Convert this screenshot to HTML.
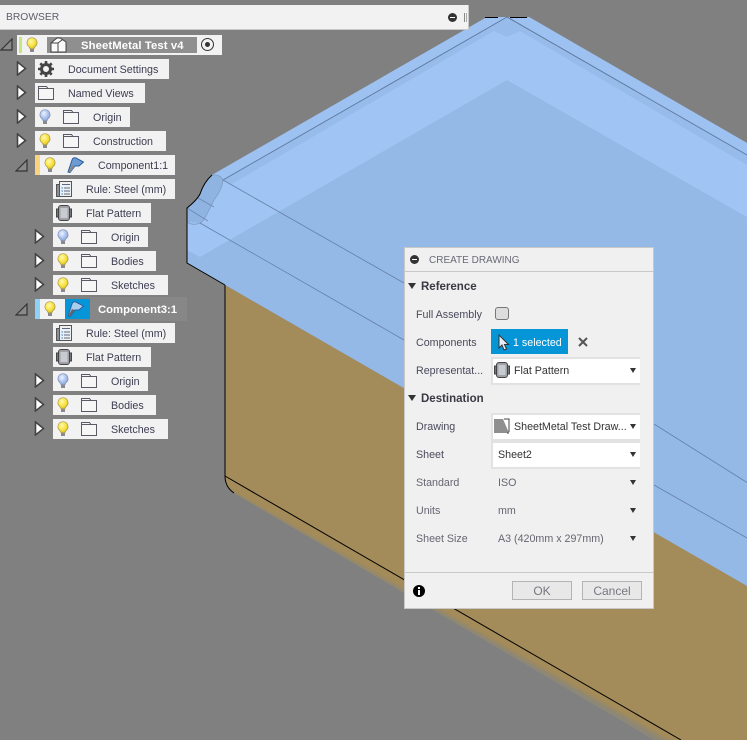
<!DOCTYPE html>
<html><head><meta charset="utf-8">
<style>
html,body{margin:0;padding:0;background:#808080}
#p{position:relative;width:747px;height:740px;overflow:hidden;background:#808080;font-family:"Liberation Sans",sans-serif;font-size:10.7px;color:#3d3d52}
#bg{position:absolute;left:0;top:0}
.a{position:absolute}
.r{position:absolute;height:20px;background:#f2f2f2}
.t{position:absolute;line-height:22px;white-space:nowrap}
.b{font-weight:bold;font-size:11.3px;color:#fff}
.l{position:absolute;left:416px;line-height:16px;white-space:nowrap;color:#4a4a5c}
.v{position:absolute;left:498px;line-height:16px;white-space:nowrap;color:#4a4a5c}
.s{position:absolute;left:491px;width:147px;height:24px;background:#fff;border:solid #e2e2e2;border-width:2px 0 2px 2px;box-sizing:content-box}
.h{position:absolute;left:421px;font-weight:bold;line-height:14px;font-size:11.5px;color:#3a3a44}
.ar{position:absolute;left:630px;width:0;height:0;border:3.5px solid transparent;border-top:5px solid #333;border-bottom:0}
.btn{position:absolute;top:581px;height:17px;width:58px;background:#e8e8e8;border:1px solid #b4b4b4;text-align:center;line-height:18px;font-size:12px;color:#777780}
svg.i{position:absolute;overflow:visible}
</style></head><body><div id="p">
<svg id="bg" width="747" height="740" viewBox="0 0 747 740">
<defs><linearGradient id="eg" gradientUnits="userSpaceOnUse" x1="400" y1="577" x2="394" y2="587.500"><stop offset="0" stop-color="#a38b5a"/><stop offset=".55" stop-color="#a38b5a"/><stop offset="1" stop-color="#8c8776"/></linearGradient></defs>
<polygon points="225,285 747,586 747,740 681,740 225,476" fill="#a38b5a"/>
<polygon points="225,476 681,740 654,740 234,493 225,484" fill="url(#eg)"/>
<path d="M225,285V476Q225,487 234,493" fill="none" stroke="#000" stroke-width="1"/>
<path d="M225,476L681,740" stroke="#000" stroke-width="1" fill="none"/>
<polygon points="487,17 529,17 747,143 747,586 187,263 187,208 198,198 202,190 212,175" fill="#95b9e7"/>
<polygon points="487,17 529,17 747,143 747,155 507,17 223,180 212,175" fill="#9dc1f1"/>
<polygon points="507,18 747,155 747,217 507,80 200,257 187,250 187,222 223,181" fill="#a0c4f4"/>
<polygon points="507,18 747,155 747,165 520,31 507,37 494,31 232,184 223,181" fill="#97bbea"/>
<path d="M212,175Q220,174 223,180Q222,190 214,200L206,216Q203,222 200,223L187,222V208Q197,200 200,194Q204,182 212,175Z" fill="#90b4e1"/>
<path d="M212,175Q220,174 223,180Q222,190 214,200L206,216Q203,222 200,223Q193,226 187,222" fill="none" stroke="#7f9cc4" stroke-width=".8"/>
<path d="M187,208L208,221M198,198L214,207" stroke="#6d88ae" stroke-width=".8" fill="none"/>
<path d="M485,17.500H498M510,17.500H527" fill="none" stroke="#000" stroke-width="1"/>
<path d="M212,175Q204,182 200,194Q197,200 187,208V263L225,285" fill="none" stroke="#000" stroke-width="1"/>
<path d="M223,180L507,17L747,155" fill="none" stroke="#5f789e" stroke-width=".9"/>
<path d="M223,180L404,283M654,424L747,482.500M200,223L404,340M654,485L747,538" fill="none" stroke="#6480a8" stroke-width=".8"/>
</svg>

<svg width="0" height="0" style="position:absolute"><defs>
<radialGradient id="yg" cx=".4" cy=".35" r=".7"><stop offset="0" stop-color="#fff8b0"/><stop offset=".6" stop-color="#f8e23c"/><stop offset="1" stop-color="#d8b820"/></radialGradient>
<radialGradient id="bg2" cx=".4" cy=".35" r=".7"><stop offset="0" stop-color="#eef3ff"/><stop offset=".6" stop-color="#a9c0ec"/><stop offset="1" stop-color="#8aa3d4"/></radialGradient>
<symbol id="by" viewBox="0 0 12 16"><path d="M6,.7a5,5 0 0 1 3,9c-.8.7-1,1.2-1,2H4c0-.8-.2-1.3-1-2a5,5 0 0 1 3-9z" fill="url(#yg)" stroke="#a89a50" stroke-width=".7"/><rect x="4" y="12" width="4" height="3" fill="#8a8a8a"/></symbol>
<symbol id="bb" viewBox="0 0 12 16"><path d="M6,.7a5,5 0 0 1 3,9c-.8.7-1,1.2-1,2H4c0-.8-.2-1.3-1-2a5,5 0 0 1 3-9z" fill="url(#bg2)" stroke="#7f8fb5" stroke-width=".7"/><rect x="4" y="12" width="4" height="3" fill="#8a8a8a"/></symbol>
<symbol id="fo" viewBox="0 0 16 14"><path d="M.5,13.500V.5H8.500L10,2.500H15.500V13.500ZM.5,2.500H10" fill="#f6f6f6" stroke="#5a5a64" stroke-width="1"/></symbol>
<symbol id="tr" viewBox="0 0 11 15"><path d="M1.500,1L9.500,7.500L1.500,14Z" fill="#fff" stroke="#444" stroke-width="1.600"/></symbol>
<symbol id="td" viewBox="0 0 13 13"><path d="M1,12L12,1V12Z" fill="#8a8a8a" stroke="#333" stroke-width="1.200"/></symbol>
<symbol id="fp" viewBox="0 0 16 16"><rect x=".5" y="4" width="15" height="8" fill="#777" stroke="#444"/><rect x="2.500" y=".5" width="11" height="15" rx="2.500" fill="#9ea2a8" stroke="#444"/><rect x="4.500" y="3" width="7" height="10" fill="#c8cbcf"/></symbol>
<symbol id="ru" viewBox="0 0 16 16"><rect x="3.500" y=".5" width="12" height="15" fill="#eef1f4" stroke="#555"/><rect x=".5" y="3.500" width="3" height="12" fill="#8b8f96" stroke="#555"/><path d="M6,3.500h8M8,7h6M8,10h6M8,13h6" stroke="#5a6a80"/><path d="M5.500,7h1.500M5.500,10h1.500M5.500,13h1.500" stroke="#2c82c9"/></symbol>
<symbol id="co" viewBox="0 0 17 16"><path d="M1,15L5,3Q6,0 9,1L16.500,5L12,9H8L3,15.500Z" fill="#6d9bd2" stroke="#2a5f9e" stroke-width="1"/><path d="M1.500,14.500L3.500,15L7.500,9L5,8Z" fill="#8a8a8a"/></symbol>
<symbol id="co2" viewBox="0 0 17 16"><path d="M1,15L5,3Q6,0 9,1L16.500,5L12,9H8L3,15.500Z" fill="#a9cdee" stroke="#2a5f9e" stroke-width="1"/><path d="M1.500,14.500L3.500,15L7.500,9L5,8Z" fill="#666"/></symbol>
</defs></svg>

<!-- browser header -->
<div class="a" style="left:0;top:5px;width:468px;height:24px;background:#f2f2f2;border-bottom:1px solid #c8c8c8;border-right:1px solid #c8c8c8"></div>
<div class="a" style="left:6px;top:11px;line-height:14px;color:#5f5f6a;font-size:10.300px">BROWSER</div>
<div class="a" style="left:448px;top:13px;width:9px;height:9px;border-radius:50%;background:#333"></div>
<div class="a" style="left:450px;top:17px;width:5px;height:1px;background:#fff"></div>
<div class="a" style="left:464px;top:13px;width:1px;height:9px;background:#888"></div>
<div class="a" style="left:466px;top:13px;width:1px;height:9px;background:#aaa"></div>

<!-- root -->
<div class="r" style="left:17px;top:35px;width:205px"></div>
<div class="a" style="left:19px;top:37px;width:3px;height:16px;background:#c7e67c"></div>
<div class="a" style="left:47px;top:37px;width:150px;height:16px;background:#8f8f8f"></div>
<div class="t b" style="left:81px;top:35px;letter-spacing:.1px">SheetMetal Test v4</div>
<svg class="i" style="left:0;top:38px" width="13" height="13"><use href="#td"/></svg>
<svg class="i" style="left:26px;top:37px" width="12" height="16"><use href="#by"/></svg>
<svg class="i" style="left:50px;top:37px" width="17" height="16" viewBox="0 0 17 16"><path d="M1,6L7,1H10L16,5V15H1ZM1,6H8V15M8,6L12,3" fill="#fafafa" stroke="#444" stroke-width="1"/></svg>
<div class="a" style="left:201px;top:38px;width:11px;height:11px;border:1.500px solid #333;border-radius:50%"></div>
<div class="a" style="left:205px;top:42px;width:5px;height:5px;background:#333;border-radius:50%"></div>

<!-- rows -->
<div class="r" style="left:35px;top:59px;width:134px"></div><div class="t" style="left:68px;top:59px">Document Settings</div>
<svg class="i" style="left:38px;top:61px" width="16" height="16" viewBox="0 0 16 16"><circle cx="8" cy="8" r="4.500" fill="none" stroke="#444" stroke-width="3"/><path d="M8,0V3M8,13V16M0,8H3M13,8H16M2.300,2.300L4.400,4.400M11.600,11.600L13.700,13.700M2.300,13.700L4.400,11.600M11.600,4.400L13.700,2.300" stroke="#444" stroke-width="2.600"/></svg>
<svg class="i" style="left:16px;top:61px" width="11" height="15"><use href="#tr"/></svg>

<div class="r" style="left:35px;top:83px;width:110px"></div><div class="t" style="left:68px;top:83px">Named Views</div>
<svg class="i" style="left:38px;top:86px" width="16" height="14"><use href="#fo"/></svg>
<svg class="i" style="left:16px;top:85px" width="11" height="15"><use href="#tr"/></svg>

<div class="r" style="left:35px;top:107px;width:95px"></div><div class="t" style="left:93px;top:107px">Origin</div>
<svg class="i" style="left:39px;top:109px" width="12" height="16"><use href="#bb"/></svg>
<svg class="i" style="left:63px;top:110px" width="16" height="14"><use href="#fo"/></svg>
<svg class="i" style="left:16px;top:109px" width="11" height="15"><use href="#tr"/></svg>

<div class="r" style="left:35px;top:131px;width:131px"></div><div class="t" style="left:93px;top:131px">Construction</div>
<svg class="i" style="left:39px;top:133px" width="12" height="16"><use href="#by"/></svg>
<svg class="i" style="left:63px;top:134px" width="16" height="14"><use href="#fo"/></svg>
<svg class="i" style="left:16px;top:133px" width="11" height="15"><use href="#tr"/></svg>

<div class="r" style="left:35px;top:155px;width:140px"></div>
<div class="a" style="left:35px;top:155px;width:5px;height:20px;background:#fbd27f"></div>
<div class="t" style="left:98px;top:155px">Component1:1</div>
<svg class="i" style="left:44px;top:157px" width="12" height="16"><use href="#by"/></svg>
<svg class="i" style="left:67px;top:157px" width="17" height="16"><use href="#co"/></svg>
<svg class="i" style="left:15px;top:159px" width="13" height="13"><use href="#td"/></svg>

<div class="r" style="left:53px;top:179px;width:122px"></div><div class="t" style="left:86px;top:179px">Rule: Steel (mm)</div>
<svg class="i" style="left:56px;top:181px" width="16" height="16"><use href="#ru"/></svg>
<div class="r" style="left:53px;top:203px;width:98px"></div><div class="t" style="left:86px;top:203px">Flat Pattern</div>
<svg class="i" style="left:56px;top:205px" width="16" height="16"><use href="#fp"/></svg>

<div class="r" style="left:53px;top:227px;width:95px"></div><div class="t" style="left:111px;top:227px">Origin</div>
<svg class="i" style="left:57px;top:229px" width="12" height="16"><use href="#bb"/></svg>
<svg class="i" style="left:81px;top:230px" width="16" height="14"><use href="#fo"/></svg>
<svg class="i" style="left:34px;top:229px" width="11" height="15"><use href="#tr"/></svg>

<div class="r" style="left:53px;top:251px;width:103px"></div><div class="t" style="left:111px;top:251px">Bodies</div>
<svg class="i" style="left:57px;top:253px" width="12" height="16"><use href="#by"/></svg>
<svg class="i" style="left:81px;top:254px" width="16" height="14"><use href="#fo"/></svg>
<svg class="i" style="left:34px;top:253px" width="11" height="15"><use href="#tr"/></svg>

<div class="r" style="left:53px;top:275px;width:115px"></div><div class="t" style="left:111px;top:275px">Sketches</div>
<svg class="i" style="left:57px;top:277px" width="12" height="16"><use href="#by"/></svg>
<svg class="i" style="left:81px;top:278px" width="16" height="14"><use href="#fo"/></svg>
<svg class="i" style="left:34px;top:277px" width="11" height="15"><use href="#tr"/></svg>

<div class="a" style="left:90px;top:297px;width:97px;height:24px;background:#878787"></div>
<div class="r" style="left:35px;top:299px;width:30px"></div>
<div class="a" style="left:35px;top:299px;width:5px;height:20px;background:#8ed1f7"></div>
<div class="a" style="left:65px;top:299px;width:25px;height:20px;background:#0696d7"></div>
<div class="t b" style="left:98px;top:299px">Component3:1</div>
<svg class="i" style="left:44px;top:301px" width="12" height="16"><use href="#by"/></svg>
<svg class="i" style="left:67px;top:301px" width="17" height="16"><use href="#co2"/></svg>
<svg class="i" style="left:15px;top:303px" width="13" height="13"><use href="#td"/></svg>

<div class="r" style="left:53px;top:323px;width:122px"></div><div class="t" style="left:86px;top:323px">Rule: Steel (mm)</div>
<svg class="i" style="left:56px;top:325px" width="16" height="16"><use href="#ru"/></svg>
<div class="r" style="left:53px;top:347px;width:98px"></div><div class="t" style="left:86px;top:347px">Flat Pattern</div>
<svg class="i" style="left:56px;top:349px" width="16" height="16"><use href="#fp"/></svg>

<div class="r" style="left:53px;top:371px;width:95px"></div><div class="t" style="left:111px;top:371px">Origin</div>
<svg class="i" style="left:57px;top:373px" width="12" height="16"><use href="#bb"/></svg>
<svg class="i" style="left:81px;top:374px" width="16" height="14"><use href="#fo"/></svg>
<svg class="i" style="left:34px;top:373px" width="11" height="15"><use href="#tr"/></svg>

<div class="r" style="left:53px;top:395px;width:103px"></div><div class="t" style="left:111px;top:395px">Bodies</div>
<svg class="i" style="left:57px;top:397px" width="12" height="16"><use href="#by"/></svg>
<svg class="i" style="left:81px;top:398px" width="16" height="14"><use href="#fo"/></svg>
<svg class="i" style="left:34px;top:397px" width="11" height="15"><use href="#tr"/></svg>

<div class="r" style="left:53px;top:419px;width:115px"></div><div class="t" style="left:111px;top:419px">Sketches</div>
<svg class="i" style="left:57px;top:421px" width="12" height="16"><use href="#by"/></svg>
<svg class="i" style="left:81px;top:422px" width="16" height="14"><use href="#fo"/></svg>
<svg class="i" style="left:34px;top:421px" width="11" height="15"><use href="#tr"/></svg>

<!-- dialog -->
<div class="a" style="left:404px;top:247px;width:248px;height:360px;background:#f0f0f0;border:1px solid #c8c8c8"></div>
<div class="a" style="left:405px;top:271px;width:248px;height:1px;background:#c8c8c8"></div>
<div class="a" style="left:405px;top:572px;width:248px;height:1px;background:#c8c8c8"></div>
<div class="a" style="left:410px;top:255px;width:9px;height:9px;border-radius:50%;background:#333"></div>
<div class="a" style="left:412px;top:259px;width:5px;height:1px;background:#fff"></div>
<div class="a" style="left:429px;top:254px;line-height:14px;color:#6a6a78;font-size:10px">CREATE DRAWING</div>

<div class="a" style="left:408px;top:283px;width:0;height:0;border:4px solid transparent;border-top:6px solid #333;border-bottom:0"></div>
<div class="h" style="top:280px">Reference</div>
<div class="l" style="top:307px">Full Assembly</div>
<div class="a" style="left:495px;top:307px;width:12px;height:11px;border:1.500px solid #777;border-radius:3px;background:#ddd"></div>
<div class="l" style="top:335px">Components</div>
<div class="a" style="left:491px;top:329px;width:77px;height:25px;background:#0696d7"></div>
<svg class="i" style="left:498px;top:334px" width="11" height="17" viewBox="0 0 11 17"><path d="M1,1V14L4,11L6,16L8.500,15L6.500,10.500H10.500Z" fill="#e8eef5" stroke="#333" stroke-width="1"/></svg>
<div class="a" style="left:513px;top:335px;line-height:16px;color:#fff">1 selected</div>
<svg class="i" style="left:578px;top:337px" width="10" height="10" viewBox="0 0 10 10"><path d="M1,1L9,9M9,1L1,9" stroke="#555" stroke-width="2"/></svg>

<div class="l" style="top:363px">Representat...</div>
<div class="s" style="top:357px"></div>
<svg class="i" style="left:494px;top:362px" width="16" height="16"><use href="#fp"/></svg>
<div class="v" style="left:514px;top:363px;color:#333">Flat Pattern</div>
<div class="ar" style="top:368px"></div>

<div class="a" style="left:408px;top:395px;width:0;height:0;border:4px solid transparent;border-top:6px solid #333;border-bottom:0"></div>
<div class="h" style="top:392px">Destination</div>

<div class="l" style="top:419px">Drawing</div>
<div class="s" style="top:413px"></div>
<svg class="i" style="left:494px;top:418px" width="16" height="16" viewBox="0 0 16 16"><path d="M0,1H9L15,15H0Z" fill="#8f8f8f"/><path d="M10,1H15V14M13,15H15" fill="none" stroke="#444" stroke-width="1"/></svg>
<div class="v" style="left:514px;top:419px;color:#333">SheetMetal Test Draw...</div>
<div class="ar" style="top:424px"></div>

<div class="l" style="top:447px">Sheet</div>
<div class="s" style="top:441px"></div>
<div class="v" style="top:447px;color:#333">Sheet2</div>
<div class="ar" style="top:452px"></div>

<div class="l" style="top:475px;color:#666672">Standard</div><div class="v" style="top:475px;color:#666672">ISO</div><div class="ar" style="top:480px"></div>
<div class="l" style="top:503px;color:#666672">Units</div><div class="v" style="top:503px;color:#666672">mm</div><div class="ar" style="top:508px"></div>
<div class="l" style="top:531px;color:#666672">Sheet Size</div><div class="v" style="top:531px;color:#666672">A3 (420mm x 297mm)</div><div class="ar" style="top:536px"></div>

<div class="a" style="left:413px;top:585px;width:12px;height:12px;border-radius:50%;background:#000"></div>
<div class="a" style="left:418px;top:587px;width:2px;height:2px;background:#fff"></div>
<div class="a" style="left:418px;top:590px;width:2px;height:5px;background:#fff"></div>

<div class="btn" style="left:512px">OK</div>
<div class="btn" style="left:582px">Cancel</div>
</div></body></html>
